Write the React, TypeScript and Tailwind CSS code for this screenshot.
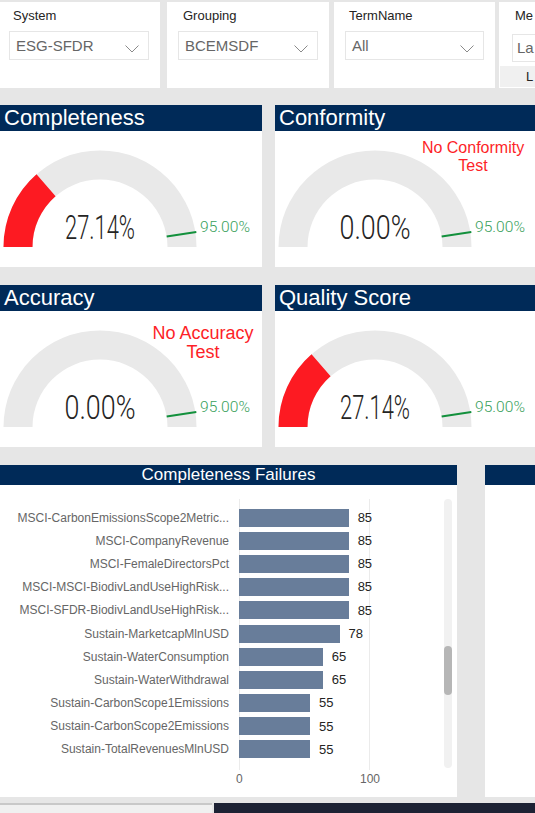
import React from "react";

type Failure = { name: string; count: number };

const failures: Failure[] = [
  { name: "MSCI-CarbonEmissionsScope2Metric...", count: 85 },
  { name: "MSCI-CompanyRevenue", count: 85 },
  { name: "MSCI-FemaleDirectorsPct", count: 85 },
  { name: "MSCI-MSCI-BiodivLandUseHighRisk...", count: 85 },
  { name: "MSCI-SFDR-BiodivLandUseHighRisk...", count: 85 },
  { name: "Sustain-MarketcapMlnUSD", count: 78 },
  { name: "Sustain-WaterConsumption", count: 65 },
  { name: "Sustain-WaterWithdrawal", count: 65 },
  { name: "Sustain-CarbonScope1Emissions", count: 55 },
  { name: "Sustain-CarbonScope2Emissions", count: 55 },
  { name: "Sustain-TotalRevenuesMlnUSD", count: 55 },
];

function Chevron() {
  return (
    <svg width="14" height="8" viewBox="0 0 14 8" className="shrink-0">
      <polyline points="0.5,0.5 7,7 13.5,0.5" fill="none" stroke="#8a8a8a" strokeWidth="1" />
    </svg>
  );
}

function Slicer({
  label,
  value,
  width,
  labelLeft,
  boxLeft,
  boxWidth,
}: {
  label: string;
  value: string;
  width: string;
  labelLeft: string;
  boxLeft: string;
  boxWidth: string;
}) {
  return (
    <div className={`h-[86px] shrink-0 bg-white ${width}`}>
      <div className={`pt-[6px] text-[13px] leading-[16px] text-[#252423] whitespace-nowrap ${labelLeft}`}>{label}</div>
      <div
        className={`mt-[7px] flex h-[29px] items-start justify-between border border-[#e6e6e6] pl-[6px] pr-[9px] ${boxLeft} ${boxWidth}`}
      >
        <span className="text-[15px] leading-[27px] text-[#666666] whitespace-nowrap">{value}</span>
        <span className="mt-[13px]">
          <Chevron />
        </span>
      </div>
    </div>
  );
}

function TileHeader({ title }: { title: string }) {
  return (
    <div className="h-[26px] overflow-hidden whitespace-nowrap bg-[#002a58] pl-[4px] text-[22px] leading-[26px] text-white">
      {title}
    </div>
  );
}

function Gauge({ value, display, textWidth }: { value: number; display: string; textWidth: number }) {
  const cx = 100;
  const cy = 116;
  const R = 96.5;
  const r = 67.5;
  const a = value * Math.PI;
  const ox = cx - R * Math.cos(a);
  const oy = cy - R * Math.sin(a);
  const ix = cx - r * Math.cos(a);
  const iy = cy - r * Math.sin(a);
  const t = 0.95 * Math.PI;
  const track = `M ${cx - R} ${cy} A ${R} ${R} 0 0 1 ${cx + R} ${cy} L ${cx + r} ${cy} A ${r} ${r} 0 0 0 ${cx - r} ${cy} Z`;
  const fill = `M ${cx - R} ${cy} A ${R} ${R} 0 0 1 ${ox} ${oy} L ${ix} ${iy} A ${r} ${r} 0 0 0 ${cx - r} ${cy} Z`;

  return (
    <svg width="262" height="136" className="block">
      <path d={track} fill="#e9e9e9" />
      {value > 0 && <path d={fill} fill="#fd1a22" />}
      <line
        x1={cx - r * Math.cos(t)}
        y1={cy - r * Math.sin(t)}
        x2={cx - R * Math.cos(t) + 1}
        y2={cy - R * Math.sin(t)}
        stroke="#12903c"
        strokeWidth="2"
      />
      <text
        x={cx}
        y={108}
        textAnchor="middle"
        fontSize="34"
        fontWeight="300"
        textLength={textWidth}
        lengthAdjust="spacingAndGlyphs"
        className="fill-[#252423] font-['Roboto',sans-serif]"
      >
        {display}
      </text>
      <text
        x={200}
        y={101}
        fontSize="15"
        fontWeight="300"
        textLength={50}
        lengthAdjust="spacingAndGlyphs"
        className="fill-[#3a9f5c] font-['Roboto',sans-serif]"
      >
        95.00%
      </text>
    </svg>
  );
}

function GaugeTile({
  title,
  value,
  display,
  textWidth,
  note,
}: {
  title: string;
  value: number;
  display: string;
  textWidth: number;
  note?: React.ReactNode;
}) {
  return (
    <div className="relative h-[162px] w-[262px] shrink-0 bg-white">
      <TileHeader title={title} />
      <Gauge value={value} display={display} textWidth={textWidth} />
      {note}
    </div>
  );
}

function FailuresChart() {
  return (
    <div className="relative h-[332px] w-[457px] shrink-0 bg-white">
      <div className="h-[20px] bg-[#002a58] text-center text-[17px] leading-[20px] text-white">Completeness Failures</div>

      {/* gridlines */}
      <div className="absolute left-[239px] top-[34px] h-[271px] w-px bg-[#ebebeb]" />
      <div className="absolute left-[369px] top-[34px] h-[271px] w-px bg-[#ebebeb]" />

      <div className="relative flex flex-col pt-[21px]">
        {failures.map((f) => (
          <div key={f.name} className="flex h-[23.2px] items-center">
            <div className="w-[229px] shrink-0 whitespace-nowrap text-right text-[12px] text-[#666666]">{f.name}</div>
            <div className="ml-[10px] h-[18px] bg-[#687d9a]" style={{ width: `${f.count * 1.29}px` }} />
            <div className="ml-[9px] text-[13px] text-[#252423]">{f.count}</div>
          </div>
        ))}
      </div>

      <div className="relative mt-[9px] h-[14px] text-[12px] text-[#666666]">
        <span className="absolute left-[236px]">0</span>
        <span className="absolute left-[360px]">100</span>
      </div>

      {/* scrollbar */}
      <div className="absolute left-[444px] top-[34px] h-[269px] w-[8px] rounded-full bg-[#f1f1f1]" />
      <div className="absolute left-[444px] top-[181px] h-[49px] w-[8px] rounded-full bg-[#b6b6b6]" />
    </div>
  );
}

export default function App() {
  return (
    <div className="relative h-[813px] w-[535px] overflow-hidden bg-[#e6e6e6] pt-[2px] font-['Liberation_Sans',Arial,sans-serif]">
      {/* slicers */}
      <div className="flex">
        <Slicer label="System" value="ESG-SFDR" width="w-[160px]" labelLeft="ml-[13px]" boxLeft="ml-[9px]" boxWidth="w-[140px]" />
        <div className="ml-[7px]">
          <Slicer label="Grouping" value="BCEMSDF" width="w-[162px]" labelLeft="ml-[16px]" boxLeft="ml-[11px]" boxWidth="w-[140px]" />
        </div>
        <div className="ml-[5px]">
          <Slicer label="TermName" value="All" width="w-[161px]" labelLeft="ml-[15px]" boxLeft="ml-[11px]" boxWidth="w-[139px]" />
        </div>
        <div className="ml-[4px] h-[86px] w-[160px] shrink-0 bg-white">
          <div className="ml-[16px] pt-[6px] text-[13px] leading-[16px] text-[#252423] whitespace-nowrap">Me</div>
          <div className="ml-[13px] mt-[10px] h-[28px] w-[140px] border border-[#e6e6e6] pl-[4px] text-[15px] leading-[26px] text-[#666666] whitespace-nowrap">
            La
          </div>
          <div className="ml-[1px] mt-[4px] h-[21px] bg-[#f0f0f0] pl-[26px] text-[13px] leading-[21px] text-[#252423] whitespace-nowrap">
            L
          </div>
        </div>
      </div>

      {/* gauges row 1 */}
      <div className="mt-[17px] flex gap-[13px]">
        <GaugeTile title="Completeness" value={0.2714} display="27.14%" textWidth={70} />
        <GaugeTile
          title="Conformity"
          value={0}
          display="0.00%"
          textWidth={71}
          note={
            <div className="absolute left-[138px] top-[34px] w-[120px] text-center text-[16px] leading-[18px] text-[#fd1f28]">
              No Conformity
              <br />
              Test
            </div>
          }
        />
      </div>

      {/* gauges row 2 */}
      <div className="mt-[18px] flex gap-[13px]">
        <GaugeTile
          title="Accuracy"
          value={0}
          display="0.00%"
          textWidth={71}
          note={
            <div className="absolute left-[138px] top-[39px] w-[130px] text-center text-[18px] leading-[19px] text-[#fd1f28]">
              No Accuracy
              <br />
              Test
            </div>
          }
        />
        <GaugeTile title="Quality Score" value={0.2714} display="27.14%" textWidth={70} />
      </div>

      {/* failures */}
      <div className="mt-[18px] flex gap-[28px]">
        <FailuresChart />
        <div className="h-[332px] w-[200px] shrink-0 bg-white">
          <div className="h-[20px] bg-[#002a58]" />
        </div>
      </div>

      {/* bottom strip */}
      <div className="mt-[6px] flex h-[12px] gap-[2px]">
        <div className="w-[212px] border-t-2 border-[#c8c8c8] bg-[#f0f0f0]" />
        <div className="flex-1 bg-[#1d2234]" />
      </div>
    </div>
  );
}
